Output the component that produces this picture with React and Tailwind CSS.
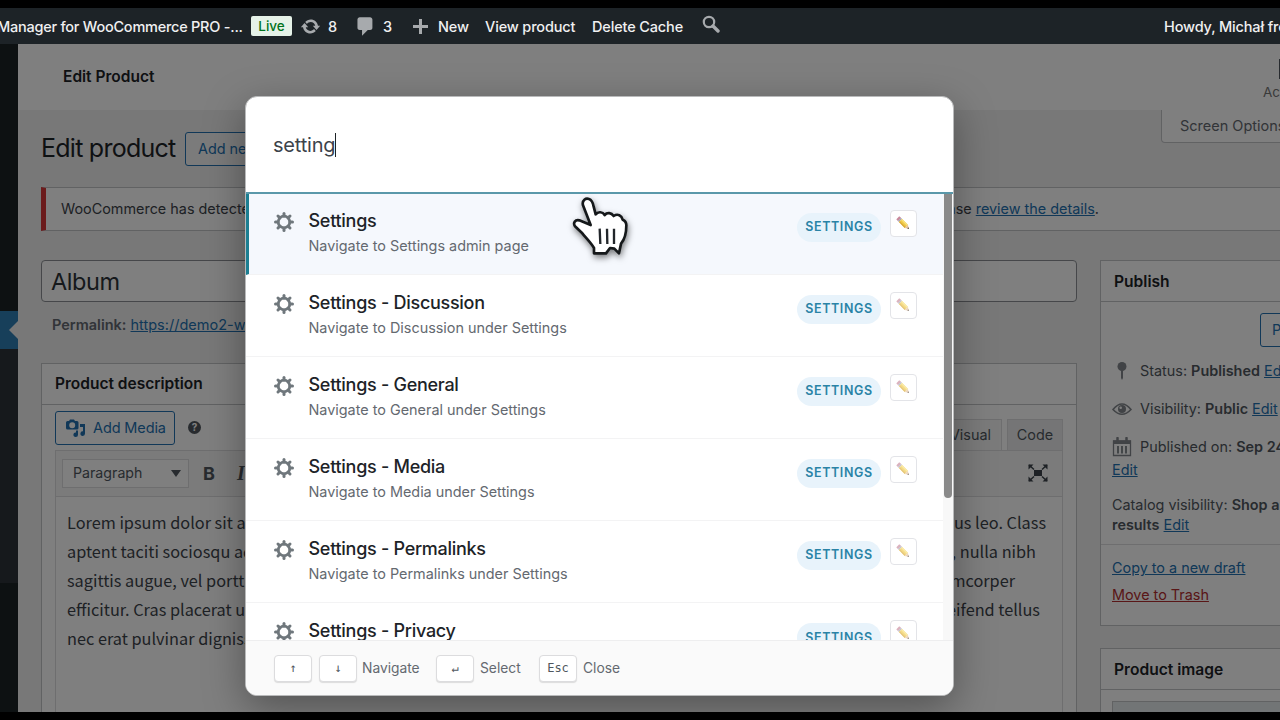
import React from "react";

const results = [
  ["Settings", "Navigate to Settings admin page"],
  ["Settings - Discussion", "Navigate to Discussion under Settings"],
  ["Settings - General", "Navigate to General under Settings"],
  ["Settings - Media", "Navigate to Media under Settings"],
  ["Settings - Permalinks", "Navigate to Permalinks under Settings"],
  ["Settings - Privacy", "Navigate to Privacy under Settings"],
];

function Gear() {
  return (
    <svg viewBox="0 0 20 20" className="size-5 shrink-0 text-[#6f777c]" fill="none" stroke="currentColor">
      <circle cx="10" cy="10" r="5.8" strokeWidth="2.8" />
      {[0, 45, 90, 135, 180, 225, 270, 315].map((a) => (
        <path key={a} d="M10 4V1.5" strokeWidth="3" strokeLinecap="round" transform={`rotate(${a} 10 10)`} />
      ))}
    </svg>
  );
}

function Pencil({ faded }) {
  return (
    <svg viewBox="0 0 16 16" className={faded ? "size-[15px] opacity-65" : "size-[15px]"}>
      <g transform="rotate(45 8 8)">
        <path d="M-.6 6.2q0-.6.6-.6h2v4.8H0q-.6 0-.6-.6z" fill="#c98a9c" />
        <path d="M1.8 5.6h1.7v4.8H1.8z" fill="#a9a7b4" />
        <path d="M3.5 5.6h8.7v4.8H3.5z" fill="#f0c945" />
        <path d="M3.5 5.6h8.7v1.6H3.5z" fill="#f8e07c" />
        <path d="M3.5 9h8.7v1.4H3.5z" fill="#d9a93a" />
        <path d="M12.2 5.6 16 8l-3.8 2.4z" fill="#e5c199" />
        <path d="m14.6 7.1 1.8.9-1.8.9z" fill="#4a3b35" />
      </g>
    </svg>
  );
}

function Key({ children }) {
  return (
    <kbd className="flex h-[27px] w-[38px] items-center justify-center rounded-[4px] border border-[#dcdcde] bg-white font-['DejaVu_Sans_Mono',monospace] text-[12px] text-[#50575e] shadow-[0_1px_1px_rgba(0,0,0,0.12)]">
      {children}
    </kbd>
  );
}

function AdminBar() {
  return (
    <header className="flex h-[36px] shrink-0 items-center whitespace-nowrap bg-[#1d2327] pt-px text-[14.5px] font-medium text-[#f0f0f1]">
      <span className="-ml-[3px] w-[254px] shrink-0 tracking-[-0.24px]">Manager for WooCommerce PRO -...</span>
      <span className="-mt-px flex h-5 w-[41px] items-center justify-center rounded-[2px] bg-[#e6f2e8] text-[13.5px] text-[#00731c]">Live</span>
      <svg viewBox="0 0 20 20" className="ml-2 size-[21px] text-[#a7aaad]" fill="currentColor">
        <path d="M10.2 3.28c3.53 0 6.43 2.61 6.92 6h2.08l-3.5 4-3.5-4h2.32c-.45-1.97-2.21-3.45-4.32-3.45-1.45 0-2.73.71-3.54 1.78L4.95 5.66C6.23 4.2 8.11 3.28 10.2 3.28zm-.4 13.44c-3.52 0-6.43-2.61-6.92-6H.8l3.5-4c1.17 1.33 2.33 2.67 3.5 4H5.48c.45 1.97 2.21 3.45 4.32 3.45 1.45 0 2.73-.71 3.54-1.78l1.71 1.95c-1.28 1.46-3.15 2.38-5.25 2.38z" />
      </svg>
      <span className="ml-[7px] w-[9px]">8</span>
      <svg viewBox="0 0 20 20" className="ml-[17px] size-[23px] text-[#a7aaad]" fill="currentColor">
        <path d="M5 2h9c1.1 0 2 .9 2 2v7c0 1.1-.9 2-2 2h-2l-5 5v-5H5c-1.1 0-2-.9-2-2V4c0-1.1.9-2 2-2z" />
      </svg>
      <span className="ml-[6px] w-[9px]">3</span>
      <svg viewBox="0 0 15 15" className="ml-[21px] size-[15px] text-[#a7aaad]" fill="currentColor">
        <path d="M6 0h3v6h6v3H9v6H6V9H0V6h6z" />
      </svg>
      <span className="ml-[10px] w-[47px] tracking-[-0.15px]">New</span>
      <span className="w-[107px] tracking-[-0.15px]">View product</span>
      <span className="w-[110px] tracking-[-0.15px]">Delete Cache</span>
      <svg viewBox="0 0 18 18" className="-mt-[5px] size-[18px] text-[#a7aaad]" fill="none" stroke="currentColor">
        <circle cx="7" cy="7" r="5.2" strokeWidth="2.2" />
        <path d="m11 11 5 5" strokeWidth="3.4" strokeLinecap="round" />
      </svg>
      <span className="ml-auto w-[116px] tracking-[-0.15px]">Howdy, Michał from</span>
    </header>
  );
}

function SideMenu() {
  return (
    <aside className="flex w-[18px] shrink-0 flex-col bg-[#1a2224]">
      <div className="h-[267px]" />
      <div className="flex h-[38px] items-center justify-end bg-[#2f7fb4]">
        <svg viewBox="0 0 9 18" className="h-[18px] w-[9px]"><path d="M9 0 0 9l9 9z" fill="#f0f0f1" /></svg>
      </div>
      <div className="h-[234px] bg-[#2c3338]" />
    </aside>
  );
}

function EditorBox() {
  const lines = [
    ["Lorem ipsum dolor sit amet,", "tellus leo. Class", "pr-[16px]"],
    ["aptent taciti sociosqu ad", "tortor, nulla nibh", "pr-[26px]"],
    ["sagittis augue, vel porttitor", "ullamcorper", "pr-[47px]"],
    ["efficitur. Cras placerat ut", "eleifend tellus", "pr-[22px]"],
    ["nec erat pulvinar dignissim", "", "pr-0"],
  ];
  return (
    <section className="mt-[28px] flex h-[360px] flex-col border border-[#c3c4c7] bg-white">
      <h2 className="flex h-[41px] shrink-0 items-center border-b border-[#c3c4c7] pl-[13px] text-[15.5px] font-semibold text-[#1d2327]">Product description</h2>
      <div className="flex flex-1 flex-col px-[13px]">
        <div className="flex h-[45px] items-end">
          <div className="mb-[5px] flex h-[34px] w-[120px] items-center rounded-[3px] border border-[#2271b1] pl-[10px] text-[14.5px] tracking-[-0.12px] text-[#2271b1]">
            <svg viewBox="0 0 20 20" className="mr-[7px] size-5" fill="currentColor">
              <path fillRule="evenodd" d="M1.5 3H3l1-1.500h4L9 3h2q1.500 0 1.500 1.500V10q0 1.500-1.500 1.500H1.500Q0 11.500 0 10V4.500Q0 3 1.500 3zM6.200 4.200a3 3 0 1 0 0 6 3 3 0 0 0 0-6z" />
              <path d="M14 6h5v9.500a2.300 2.300 0 1 1-2-2.200V9h-3z" />
              <path d="M10 12.500h2v4.200a2.300 2.300 0 1 1-2-2.200z" />
            </svg>
            Add Media
          </div>
          <span className="mb-[16px] ml-[13px] flex size-[13px] items-center justify-center rounded-full bg-[#50575e] text-[10px] font-bold text-white">?</span>
          <div className="ml-auto flex h-[31px] gap-[5px] text-[14.4px] text-[#50575e]">
            <span className="flex w-[62px] items-center justify-end border border-b-0 border-[#dcdcde] bg-[#f6f7f7] pb-px pr-[10px]">Visual</span>
            <span className="flex w-[56px] items-center justify-center border border-b-0 border-[#dcdcde] bg-[#ebebec] pb-px">Code</span>
          </div>
        </div>
        <div className="flex flex-1 flex-col border border-b-0 border-[#dcdcde]">
          <div className="flex h-[46px] shrink-0 items-center border-b border-[#dcdcde] bg-[#f6f7f7] pb-px pl-[6px] pr-[14px]">
            <div className="flex h-[29px] w-[127px] items-center justify-between border border-[#dcdcde] bg-white pl-[10px] pr-[7px] text-[14.2px] text-[#50575e]">
              Paragraph
              <svg viewBox="0 0 10 7" className="h-[7px] w-[10px]"><path d="M0 0h10L5 7z" fill="#50575e" /></svg>
            </div>
            <span className="ml-[14px] text-[18px] font-bold text-[#50575e]">B</span>
            <span className="ml-[22px] font-['Liberation_Serif',serif] text-[20px] font-bold italic text-[#50575e]">I</span>
            <svg viewBox="0 0 20 18" className="ml-auto h-[18px] w-5" fill="#3c434a" stroke="#3c434a">
              <path d="M6 6h8v6H6z" stroke="none" />
              <path d="M1 1l5 4.500M19 1l-5 4.500M1 17l5-4.500M19 17l-5-4.500" strokeWidth="1.500" />
              <path d="M.5.500h5l-5 5zM19.500.500h-5l5 5zM.500 17.500h5l-5-5zM19.500 17.500h-5l5-5z" stroke="none" />
            </svg>
          </div>
          <div className="pl-[11px] pt-[11px] font-['Noto_Sans_CJK_SC',sans-serif] text-[16.3px] leading-[29px] text-[#3c434a]">
            {lines.map(([a, b, pad]) => (
              <p key={a} className={`flex h-[29px] justify-between ${pad}`}>
                <span>{a}</span>
                <span>{b}</span>
              </p>
            ))}
          </div>
        </div>
      </div>
    </section>
  );
}

function Link({ children }) {
  return <a className="text-[#2271b1] underline">{children}</a>;
}

function Publish() {
  return (
    <section className="flex h-[366px] flex-col border border-[#c3c4c7] bg-white text-[14.4px] text-[#50575e]">
      <h2 className="flex h-[41px] shrink-0 items-center border-b border-[#c3c4c7] pl-[13px] pt-px text-[15.6px] font-semibold text-[#1d2327]">Publish</h2>
      <div className="flex h-[243px] shrink-0 flex-col border-b border-[#dcdcde] pl-[11px]">
        <div className="ml-[148px] mt-[11px] flex h-[34px] w-[90px] shrink-0 items-center rounded-[3px] border border-[#2271b1] pl-[11px] text-[#2271b1]">Preview</div>
        <p className="mt-[14px] flex h-5 items-center">
          <svg viewBox="0 0 20 20" className="mr-[8px] size-5" fill="#82878c"><circle cx="10" cy="5.500" r="4.500" /><path d="M9 9h2v8l-1 2-1-2z" /></svg>
          <span>Status: <b className="font-semibold">Published</b> <Link>Edit</Link></span>
        </p>
        <p className="mt-[18px] flex h-5 items-center">
          <svg viewBox="0 0 20 20" className="mr-[8px] size-5" fill="none" stroke="#82878c">
            <path d="M1 10.500Q10-.500 19 10.500 10 20 1 10.500z" strokeWidth="1.600" />
            <circle cx="10" cy="10" r="4" fill="#82878c" stroke="none" /><circle cx="8.700" cy="8.700" r="1.300" fill="#fff" stroke="none" />
          </svg>
          <span>Visibility: <b className="font-semibold">Public</b> <Link>Edit</Link></span>
        </p>
        <p className="mt-[18px] flex h-5 items-center">
          <svg viewBox="0 0 20 20" className="mr-[8px] size-5" fill="none" stroke="#82878c">
            <path d="M1.500 4h17v14.500h-17z" strokeWidth="1.300" /><path d="M1 3.500h18V7H1z" fill="#82878c" stroke="none" />
            <path d="M5.500 1v4M14.500 1v4" strokeWidth="2.500" strokeLinecap="round" /><path d="M6 9v7.500M10 9v7.500M14 9v7.500" strokeWidth="1.900" />
          </svg>
          <span className="whitespace-nowrap">Published on: <b className="font-semibold">Sep 24,</b></span>
        </p>
        <p className="mt-[3px] h-5 leading-5"><Link>Edit</Link></p>
        <p className="mt-[15px] whitespace-nowrap leading-5">Catalog visibility: <b className="font-semibold">Shop and</b><br /><b className="font-semibold">results</b> <Link>Edit</Link></p>
      </div>
      <div className="flex flex-col gap-[7px] pl-[11px] pt-[13px] leading-5">
        <Link>Copy to a new draft</Link>
        <a className="text-[#b32d2e] underline">Move to Trash</a>
      </div>
    </section>
  );
}

function Page() {
  return (
    <main className="flex flex-1 flex-col overflow-hidden bg-[#f0f0f1] text-[#3c434a]">
      <div className="flex h-[66px] shrink-0 items-center justify-between bg-white pl-[45px]">
        <h1 className="text-[15.5px] font-semibold text-[#1d2327]">Edit Product</h1>
        <div className="flex w-[17px] flex-col whitespace-nowrap pt-[6px] text-[13.5px] text-[#757575]">
          <span className="ml-4 h-5 w-5 bg-[#50575e]" />
          <span className="mt-[3px] leading-5">Activity</span>
        </div>
      </div>
      <div className="flex shrink-0 pl-[23px]">
        <div className="flex w-[1036px] shrink-0 flex-col">
          <div className="flex h-[77px] items-center">
            <h2 className="w-[144px] whitespace-nowrap pt-px text-[25px] tracking-[-0.75px] text-[#1d2327]">Edit product</h2>
            <span className="flex h-[34px] w-[140px] items-center rounded-[3px] border border-[#2271b1] bg-[#f6f7f7] pl-[12px] text-[14.4px] text-[#2271b1]">Add new product</span>
          </div>
          <div className="flex h-[44px] w-[1300px] items-center justify-between border border-l-[5px] border-[#c3c4c7] border-l-[#d63638] bg-white pl-[15px] text-[14.4px]">
            <span>WooCommerce has detected</span>
            <span className="mr-[241px]">please <Link>review the details</Link>.</span>
          </div>
          <div className="mt-[29px] flex h-[42px] items-center rounded-[4px] border border-[#8c8f94] bg-white pl-[9px] pt-px text-[23.5px] tracking-[-0.4px] text-[#2c3338]">Album</div>
          <p className="mt-[13px] h-5 pl-[11px] text-[14.5px] leading-5 text-[#646970]"><b className="font-semibold">Permalink:</b> <Link>https://demo2-wp</Link></p>
          <EditorBox />
        </div>
        <div className="ml-[23px] flex w-[300px] shrink-0 flex-col">
          <div className="ml-[61px] flex h-[33px] items-center rounded-b-[4px] border border-t-0 border-[#c3c4c7] bg-white pl-[18px] text-[14.5px] text-[#646970]">Screen Options</div>
          <div className="mt-[117px]"><Publish /></div>
          <section className="mt-[22px] border border-[#c3c4c7] bg-white">
            <h2 className="flex h-[41px] items-center border-b border-[#c3c4c7] pl-[13px] pt-px text-[15.6px] font-semibold text-[#1d2327]">Product image</h2>
            <div className="ml-[11px] mt-[11px] h-[60px] border border-[#c3c4c7] bg-[#e4eaec]" />
          </section>
        </div>
      </div>
    </main>
  );
}

function Palette() {
  return (
    <div className="absolute left-[245px] top-[96px] flex h-[600px] w-[709px] flex-col overflow-hidden rounded-[12px] border border-[#b9babb] bg-white shadow-[0_12px_40px_rgba(0,0,0,0.35)]">
      <div className="flex h-[95px] shrink-0 items-center pl-[27px]">
        <span className="text-[20px] tracking-[-0.2px] text-[#3c434a]">setting</span>
        <span className="h-6 w-px bg-[#1d2327]" />
      </div>
      <div className="flex h-[448px] shrink-0 overflow-hidden border-t-2 border-[#5a98aa]">
        <ul className="-mt-px flex w-[697px] flex-col">
          {results.map(([title, sub], i) => (
            <li key={title} className={i === 0 ? "flex h-[82px] shrink-0 border-b border-l-[3px] border-b-[#f3f3f4] border-l-[#1d7f92] bg-[#f5f8fd] pl-[25px] pr-[26px]" : "flex h-[82.1px] shrink-0 border-b border-[#f3f3f4] pl-[28px] pr-[26px]"}>
              <span className="mt-[19px]"><Gear /></span>
              <div className="ml-[14.5px] mt-[16px] flex-1">
                <h3 className="text-[18px] font-medium leading-6 tracking-[-0.28px] text-[#1d2327]">{title}</h3>
                <p className="mt-[2px] text-[14.4px] leading-[22px] text-[#646970]">{sub}</p>
              </div>
              <span className="mt-[20px] flex h-[29px] w-[84px] items-center justify-center rounded-full bg-[#e8f3fb] text-[12.5px] font-semibold tracking-[0.6px] text-[#2a83a6]">SETTINGS</span>
              <span className="ml-[9px] mt-[17px] flex size-[27px] items-center justify-center rounded-[4px] border border-[#e3e4e8] bg-white"><Pencil faded={i > 0} /></span>
            </li>
          ))}
        </ul>
        <div className="ml-auto w-[10px] bg-[#f8f8f8]"><div className="ml-px h-[304px] w-[8px] rounded-b-full bg-[#8a8a8a]" /></div>
      </div>
      <footer className="flex flex-1 items-center border-t border-[#eeeeef] bg-[#fafafa] pl-[28px] text-[13.8px] text-[#646970]">
        <Key>↑</Key>
        <span className="w-[7px]" />
        <Key>↓</Key>
        <span className="ml-[5px] w-[74px]">Navigate</span>
        <Key>↵</Key>
        <span className="ml-[6px] w-[59px]">Select</span>
        <Key>Esc</Key>
        <span className="ml-[6px]">Close</span>
      </footer>
    </div>
  );
}

function Hand() {
  return (
    <svg viewBox="0 0 360 300" className="absolute left-[540px] top-[180px] h-[100px] w-[120px] drop-shadow-[1px_3px_3px_rgba(0,0,0,0.5)]">
      <path d="M129 76C125 60 138 53 147 57c9 3 12 12 14 23l6 23c7-9 21-8 27 2 8-9 20-7 27 3 12-8 24-2 27 11 8 3 11 9 11 17 0 26-8 46-16 55l-6 29-14-14-13-2-12 16h-36v-16c-9-16-24-30-35-44l-22-21c-7-11 1-21 13-18l34 14z" fill="#fff" stroke="#15181a" strokeWidth="8" strokeLinejoin="round" />
      <path d="M179 146l2 46M201 146l1 46M222 146v46" stroke="#22262a" strokeWidth="7" />
    </svg>
  );
}

export default function App() {
  return (
    <div className="relative flex h-[720px] w-[1280px] flex-col overflow-hidden bg-black py-2 font-['Inter',sans-serif]">
      <AdminBar />
      <div className="relative flex h-[668px] shrink-0 overflow-hidden">
        <SideMenu />
        <Page />
        <div className="absolute inset-0 bg-black/50" />
      </div>
      <Palette />
      <Hand />
    </div>
  );
}
